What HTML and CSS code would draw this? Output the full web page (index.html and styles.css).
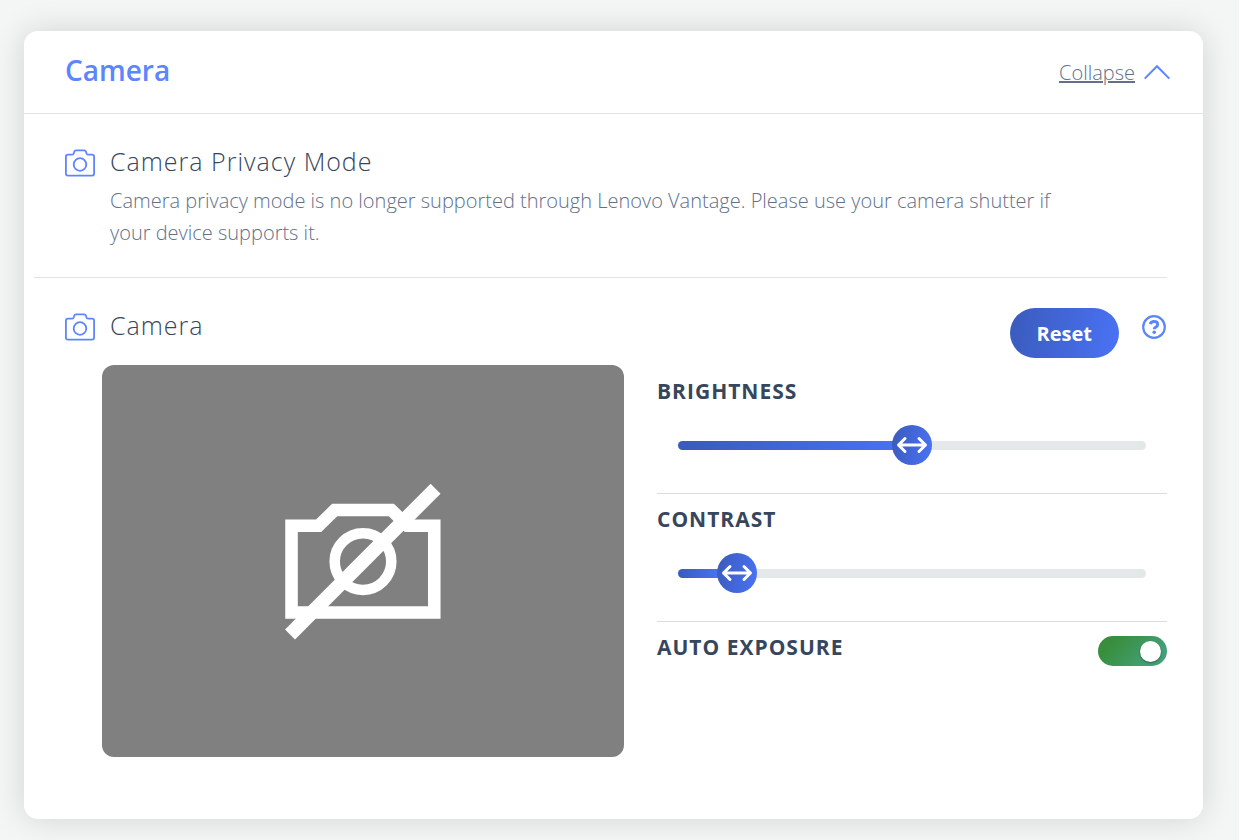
FILE: index.html
```html
<!DOCTYPE html>
<html lang="en">

<head>
    <meta charset="UTF-8">
    <meta name="viewport" content="width=device-width, initial-scale=1.0">
    <title>Camera</title>
    <link rel="stylesheet" href="styles.css">
</head>

<body>
    <main class="page">
        <section class="card">
            <header class="card-header">
                <h2>Camera</h2>
                <a href="#settings" class="collapse">
                    <span>Collapse</span>
                    <svg width="26" height="16" viewBox="0 0 26 16" fill="none" stroke="currentColor" stroke-width="2">
                        <path d="M0.7 14.6L13 2.2l12.3 12.4" />
                    </svg>
                </a>
            </header>

            <div class="card-body" id="settings">
                <div class="setting">
                    <svg class="icon" viewBox="0 0 30 28" fill="none" stroke="currentColor" stroke-width="1.8">
                        <path d="M3 5.6h4.2q1.2 0 1.5-1.2l.4-1.4q.5-1.6 2-1.6h8q1.5 0 2 1.6l.4 1.4q.3 1.2 1.5 1.2H27q2.1 0 2.1 2.1V24.5q0 2.1-2.1 2.1H3q-2.100 0-2.100-2.100V7.700q0-2.100 2.100-2.100z" />
                        <circle cx="15" cy="15.5" r="6.3" />
                    </svg>
                    <div class="setting-text">
                        <h3>Camera Privacy Mode</h3>
                        <p>Camera privacy mode is no longer supported through Lenovo Vantage. Please use your camera shutter if your device supports it.</p>
                    </div>
                </div>

                <div class="setting camera">
                    <svg class="icon" viewBox="0 0 30 28" fill="none" stroke="currentColor" stroke-width="1.8">
                        <path d="M3 5.6h4.2q1.2 0 1.5-1.2l.4-1.4q.5-1.6 2-1.6h8q1.5 0 2 1.6l.4 1.4q.3 1.2 1.5 1.2H27q2.1 0 2.1 2.1V24.5q0 2.1-2.1 2.1H3q-2.100 0-2.100-2.100V7.700q0-2.100 2.100-2.100z" />
                        <circle cx="15" cy="15.5" r="6.3" />
                    </svg>
                    <div class="setting-text">
                        <h3>Camera</h3>
                    </div>
                    <button type="button" class="reset">Reset</button>
                    <button type="button" class="help" aria-label="Help">
                        <svg width="24" height="24" viewBox="0 0 24 24" fill="none" stroke="currentColor">
                            <circle cx="12" cy="12" r="10.8" stroke-width="2.2" />
                            <path d="M8.2 9.200Q9 6.500 12 6.500q3.700 0 3.700 2.900 0 1.500-1.800 2.500-1.700 1-1.700 2.300" stroke-width="2.900" />
                            <circle cx="12.2" cy="17.3" r="1.8" fill="currentColor" stroke="none" />
                        </svg>
                    </button>
                </div>

                <div class="camera-panel">
                    <div class="preview">
                        <svg viewBox="0 0 156 156" fill="none" stroke="#fff">
                            <path d="M6.5 41.5H33.5L49.5 26H106L122 41.5H148.7V128H6.5Z" stroke-width="12.5" />
                            <circle cx="77.7" cy="77.3" r="28.2" stroke-width="10.5" />
                            <path d="M150 4.7L5 150" stroke-width="14" />
                        </svg>
                    </div>

                    <form class="controls">
                        <div class="control">
                            <label for="brightness">BRIGHTNESS</label>
                            <input type="range" id="brightness" min="0" max="100" value="50" style="--value: 50%">
                        </div>
                        <div class="control">
                            <label for="contrast">CONTRAST</label>
                            <input type="range" id="contrast" min="0" max="100" value="9" style="--value: 9%">
                        </div>
                        <div class="control switch-row">
                            <label for="exposure">AUTO EXPOSURE</label>
                            <input type="checkbox" id="exposure" class="switch" checked>
                        </div>
                    </form>
                </div>
            </div>
        </section>
    </main>
    <script>
        document.querySelectorAll('input[type="range"]').forEach(function (slider) {
            slider.addEventListener('input', function () {
                slider.style.setProperty('--value', slider.value + '%');
            });
        });
    </script>
</body>

</html>
```
FILE: styles.css
```css
* {
    box-sizing: border-box;
}

body {
    font-family: 'Segoe UI', 'Open Sans', 'Noto Sans', sans-serif;
    margin: 0;
    background-color: #fff;
    color: #36465c;
}

h2,
h3,
p {
    margin: 0;
}

.page {
    min-height: 100vh;
    margin-right: 9px;
    padding: 31px 36px 21px 24px;
    background-color: #f4f6f6;
}

.card {
    background-color: #fff;
    border-radius: 14px;
    box-shadow: 0 0 32px rgba(0, 0, 0, 0.14);
}

.card-header {
    display: flex;
    justify-content: space-between;
    align-items: center;
    height: 83px;
    padding: 0 33px 4px 41px;
    border-bottom: 1px solid #e1e4e4;
}

h2 {
    font-size: 28px;
    font-weight: 600;
    color: #5c85ff;
}

.collapse {
    display: flex;
    align-items: center;
    gap: 9px;
    padding-top: 4px;
    font-size: 20px;
    font-weight: 300;
    color: #5c85ff;
    text-decoration: none;
}

.collapse span {
    color: #62708a;
    text-decoration: underline;
    text-decoration-thickness: 2px;
}

.card-body {
    padding: 0 36px 62px 10px;
}

.setting {
    display: flex;
    align-items: flex-start;
    padding: 30px 0 28px 31px;
    border-bottom: 1px solid #e1e4e4;
}

.setting.camera {
    padding-bottom: 7px;
    border-bottom: none;
}

.icon {
    flex: none;
    width: 30px;
    height: 28px;
    margin: 5px 15px 0 0;
    color: #5c85ff;
}

.setting-text {
    flex: 1;
    padding-right: 108px;
}

h3 {
    font-size: 25px;
    font-weight: 300;
    line-height: 35px;
    letter-spacing: 1px;
}

.setting p {
    margin-top: 6px;
    font-size: 20px;
    font-weight: 300;
    line-height: 32px;
    color: #62708a;
}

.reset {
    height: 50px;
    padding: 0 27px;
    border: none;
    border-radius: 25px;
    background: linear-gradient(100deg, #3a5bbc, #4a72f5);
    color: #fff;
    font-family: inherit;
    font-size: 20px;
    font-weight: 700;
}

.help {
    display: flex;
    margin: 7px 1px 0 23px;
    padding: 0;
    border: none;
    background: none;
    color: #5c85ff;
}

.camera-panel {
    display: grid;
    grid-template-columns: 522fr 510fr;
    gap: 33px;
    padding-left: 68px;
}

.preview {
    display: flex;
    align-items: center;
    justify-content: center;
    aspect-ratio: 4 / 3;
    padding-top: 4px;
    border-radius: 12px;
    background-color: #808080;
}

.preview svg {
    width: 30%;
}

.control {
    height: 128px;
    padding-top: 11px;
    border-bottom: 1px solid #d9dddd;
}

.control:first-child {
    height: 129px;
    padding-top: 12px;
}

.control label {
    display: block;
    font-size: 21px;
    font-weight: 700;
    line-height: 28px;
    letter-spacing: 1px;
}

.control input[type="range"] {
    display: block;
    appearance: none;
    width: calc(100% - 42px);
    height: 40px;
    margin: 20px 21px 0;
    background: none;
}

input[type="range"]::-webkit-slider-runnable-track {
    height: 9px;
    border-radius: 5px;
    background: linear-gradient(90deg, #3a5bbc, #4a72f5) 0 0 / var(--value) 100% no-repeat #e4e8e8;
}

input[type="range"]::-webkit-slider-thumb {
    appearance: none;
    width: 40px;
    height: 40px;
    margin-top: -16px;
    border-radius: 50%;
    background: url("data:image/svg+xml,%3Csvg xmlns='http://www.w3.org/2000/svg' viewBox='0 0 40 40' fill='none' stroke='%23fff' stroke-width='3' stroke-linecap='round' stroke-linejoin='round'%3E%3Cpath d='M7 20H33M13 13.5L6.5 20L13 26.5M27 13.5L33.5 20L27 26.5'/%3E%3C/svg%3E"),
        linear-gradient(100deg, #3a5bbc, #4a72f5);
}

.switch-row {
    display: flex;
    justify-content: space-between;
    align-items: flex-start;
    border-bottom: none;
}

.switch {
    appearance: none;
    display: flex;
    align-items: center;
    justify-content: flex-end;
    width: 69px;
    height: 30px;
    margin: 3px 0 0;
    padding: 0 6px;
    border-radius: 15px;
    background: linear-gradient(135deg, #388e3c 20%, #43a078 80%);
}

.switch::before {
    content: "";
    width: 21px;
    height: 21px;
    border-radius: 50%;
    background-color: #fff;
    box-shadow: 0 1px 2px rgba(0, 0, 0, 0.4);
}

.switch:not(:checked) {
    justify-content: flex-start;
    background: #9aa3a8;
}
```
